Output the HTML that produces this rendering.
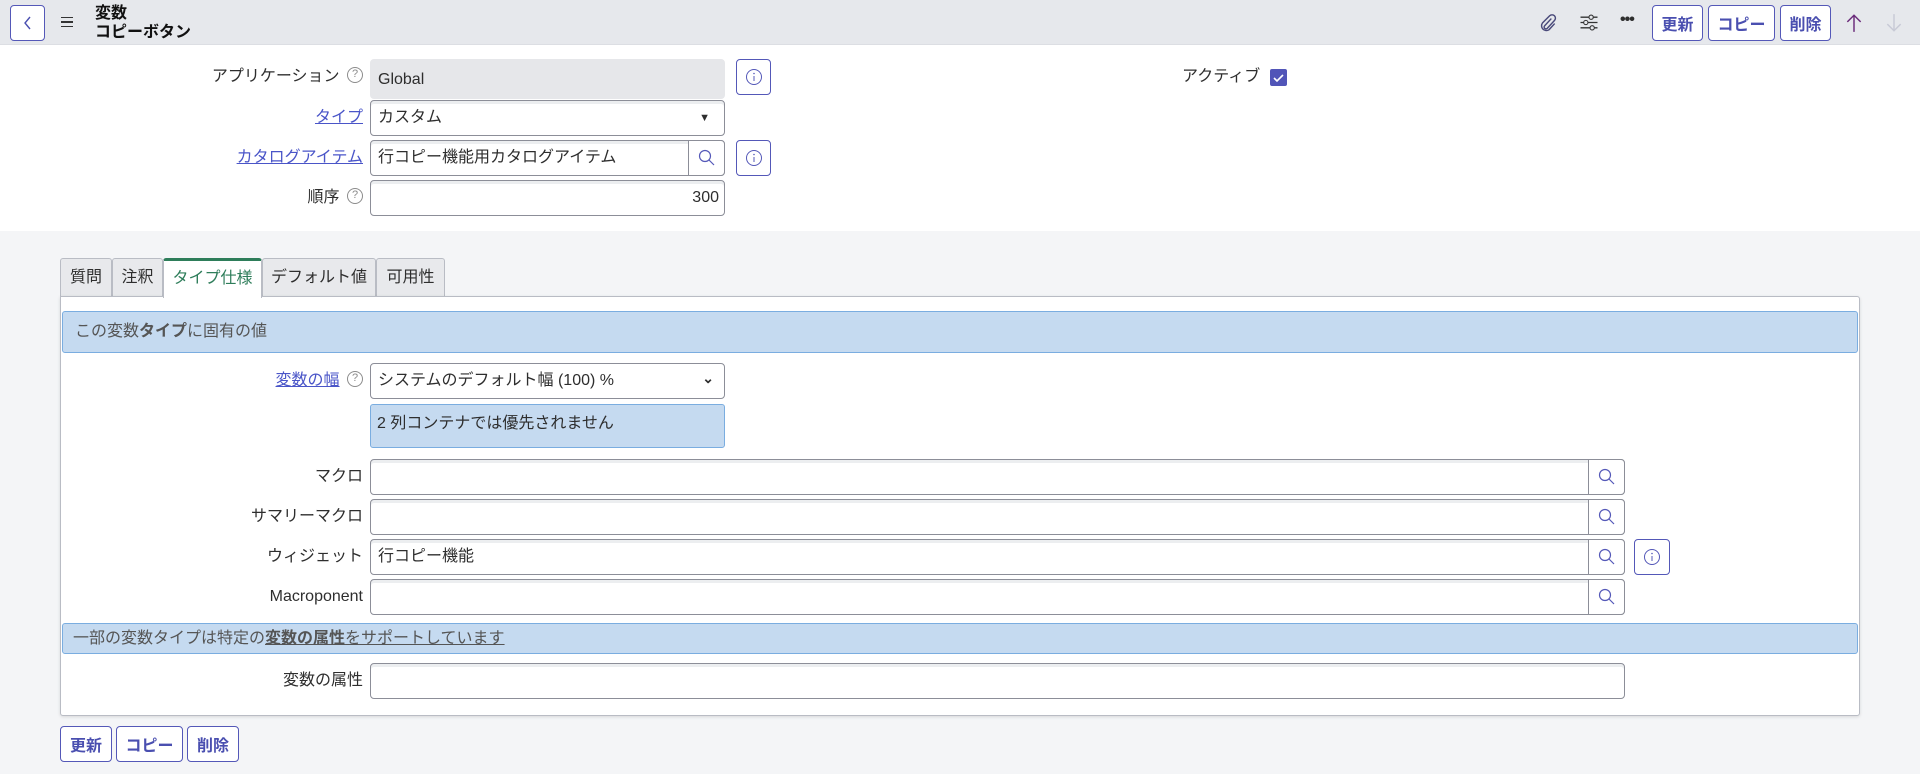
<!DOCTYPE html>
<html><head><meta charset="utf-8"><style>
*{box-sizing:border-box;margin:0;padding:0}
body{width:1920px;height:774px;background:#f4f5f7;font-family:"Liberation Sans","Noto Sans CJK JP",sans-serif;font-size:16px;color:#2e2e2e;position:relative;overflow:hidden}
.a{position:absolute}
.hdr{left:0;top:0;width:1920px;height:45px;background:#e6e8ec;border-bottom:1px solid #dcdee3}
.top{left:0;top:45px;width:1920px;height:186px;background:#fff}
.btn{position:absolute;border:1px solid #5458b8;border-radius:4px;background:#fff;color:#4a4fb0;font-weight:bold;font-size:16px;display:flex;align-items:center;justify-content:center;white-space:nowrap}
.lbl{position:absolute;right:1557px;text-align:right;white-space:nowrap;height:36px;line-height:36px}
.lnk{color:#4a55c8;text-decoration:underline}
.fld{position:absolute;border:1px solid #8c8e98;border-radius:4px;background:#fff;height:36px;line-height:34px;padding-left:7px;white-space:nowrap;box-shadow:inset 0 3px 0 #eceef0}
.srch{position:absolute;top:-1px;right:-1px;width:37px;height:36px;border:1px solid #8c8e98;border-radius:0 4px 4px 0;display:flex;align-items:center;justify-content:center;background:#fff}
.q{display:inline-block;width:16px;height:16px;border:1.3px solid #8c8c8c;border-radius:50%;vertical-align:middle;margin-left:3px;font-size:11px;line-height:13px;text-align:center;color:#8c8c8c;position:relative;top:-2px}
.tab{position:absolute;top:258px;height:39px;border:1px solid #b9bcc4;border-bottom:none;background:#e8e9ec;line-height:37px;text-align:center;border-radius:3px 3px 0 0;white-space:nowrap}
.bar{position:absolute;left:62px;width:1796px;background:#c5daf0;border:1px solid #7aade0;border-radius:3px;color:#555;padding-left:12px;white-space:nowrap}
</style></head><body>
<div class="a hdr"></div>
<div class="btn" style="left:10px;top:5px;width:35px;height:36px"><svg width="10" height="14" viewBox="0 0 10 14"><path d="M7 1L2 7l5 6" stroke="#4a4fb0" stroke-width="1.4" fill="none"/></svg></div>
<div class="a" style="left:61px;top:17px;width:12px"><div style="height:1.4px;background:#333;margin-bottom:3px"></div><div style="height:1.4px;background:#333;margin-bottom:3px"></div><div style="height:1.4px;background:#333"></div></div>
<div class="a" style="left:95px;top:4px;font-weight:bold;font-size:16px;line-height:19px;color:#111">変数<br>コピーボタン</div>
<svg class="a" style="left:1538px;top:13px" width="20" height="20" viewBox="0 0 18 18"><path d="M12 5l-6 6.5a1.6 1.6 0 0 0 2.3 2.3l6.5-7a3 3 0 0 0-4.3-4.3L4 9a4.3 4.3 0 0 0 6 6l5-5.5" stroke="#4a4a7a" stroke-width="1.3" fill="none"/></svg>
<svg class="a" style="left:1579px;top:14px" width="20" height="17" viewBox="0 0 18 16"><path d="M1 3h16M1 8h16M1 13h16" stroke="#333" stroke-width="1.2"/><circle cx="11" cy="3" r="2" fill="#e6e8ec" stroke="#333"/><circle cx="6" cy="8" r="2" fill="#e6e8ec" stroke="#333"/><circle cx="12" cy="13" r="2" fill="#e6e8ec" stroke="#333"/></svg>
<div class="a" style="left:1620px;top:11px;font-weight:bold;font-size:16px;letter-spacing:-1px">•••</div>
<div class="btn" style="left:1652px;top:5px;width:51px;height:36px">更新</div>
<div class="btn" style="left:1708px;top:5px;width:67px;height:36px">コピー</div>
<div class="btn" style="left:1780px;top:5px;width:51px;height:36px">削除</div>
<svg class="a" style="left:1845px;top:13px" width="18" height="20" viewBox="0 0 16 18"><path d="M8 17V2M2 8l6-6 6 6" stroke="#6a2a7a" stroke-width="1.3" fill="none"/></svg>
<svg class="a" style="left:1885px;top:13px" width="18" height="20" viewBox="0 0 16 18"><path d="M8 1v15M2 10l6 6 6-6" stroke="#c8cad6" stroke-width="1.3" fill="none"/></svg>

<div class="a top"></div>
<div class="lbl" style="top:59px">アプリケーション <span class="q">?</span></div>
<div class="fld" style="left:370px;top:59px;width:355px;height:40px;line-height:40px;background:#e6e7ea;border-color:#e6e7ea;box-shadow:none">Global</div>
<div class="btn" style="left:736px;top:59px;width:35px;height:36px"><svg width="18" height="18"><circle cx="9" cy="9" r="7.5" stroke="#5458b8" fill="none"/><path d="M9 8v5" stroke="#5458b8"/><circle cx="9" cy="5.5" r=".8" fill="#5458b8"/></svg></div>
<div class="lbl" style="top:100px"><span class="lnk">タイプ</span></div>
<div class="fld" style="left:370px;top:100px;width:355px">カスタム<span style="position:absolute;right:14px;font-size:11px">▼</span></div>
<div class="lbl" style="top:140px"><span class="lnk">カタログアイテム</span></div>
<div class="fld" style="left:370px;top:140px;width:355px">行コピー機能用カタログアイテム<div class="srch"><svg width="18" height="18"><circle cx="7" cy="7" r="5.5" stroke="#5458b8" fill="none" stroke-width="1.2"/><path d="M11 11l5 5" stroke="#5458b8" stroke-width="1.2"/></svg></div></div>
<div class="btn" style="left:736px;top:140px;width:35px;height:36px"><svg width="18" height="18"><circle cx="9" cy="9" r="7.5" stroke="#5458b8" fill="none"/><path d="M9 8v5" stroke="#5458b8"/><circle cx="9" cy="5.5" r=".8" fill="#5458b8"/></svg></div>
<div class="lbl" style="top:180px">順序 <span class="q">?</span></div>
<div class="fld" style="left:370px;top:180px;width:355px;text-align:right;padding-right:5px">300</div>
<div class="lbl" style="left:1182px;right:auto;top:59px">アクティブ</div>
<div class="a" style="left:1270px;top:69px;width:17px;height:17px;background:#5155b8;border-radius:2px"><svg width="17" height="17"><path d="M4 9l3 3 6-6" stroke="#fff" stroke-width="1.6" fill="none"/></svg></div>

<div class="tab" style="left:60px;width:52px">質問</div>
<div class="tab" style="left:112px;width:51px">注釈</div>
<div class="tab" style="left:163px;width:99px;background:#fff;color:#2e7d5a;border-top:3px solid #2e7d5a;line-height:35px;z-index:2;height:40px">タイプ仕様</div>
<div class="tab" style="left:262px;width:114px">デフォルト値</div>
<div class="tab" style="left:376px;width:69px">可用性</div>
<div class="a" style="left:60px;top:296px;width:1800px;height:420px;background:#fff;border:1px solid #b9bcc4;border-radius:0 3px 3px 3px;box-shadow:0 1px 3px rgba(0,0,0,.12)"></div>
<div class="bar" style="top:311px;height:42px;line-height:40px">この変数<b>タイプ</b>に固有の値</div>
<div class="lbl" style="top:363px"><span class="lnk">変数の幅</span> <span class="q">?</span></div>
<div class="fld" style="left:370px;top:363px;width:355px;box-shadow:none">システムのデフォルト幅 (100) %<span style="position:absolute;right:10px;top:-3px;font-size:14px;font-weight:bold">⌄</span></div>
<div class="a" style="left:370px;top:404px;width:355px;height:44px;background:#c5daf0;border:1px solid #7aade0;border-radius:3px;padding:4px 6px">2 列コンテナでは優先されません</div>
<div class="lbl" style="top:459px">マクロ</div>
<div class="fld" style="left:370px;top:459px;width:1255px"><div class="srch"><svg width="18" height="18"><circle cx="7" cy="7" r="5.5" stroke="#5458b8" fill="none" stroke-width="1.2"/><path d="M11 11l5 5" stroke="#5458b8" stroke-width="1.2"/></svg></div></div>
<div class="lbl" style="top:499px">サマリーマクロ</div>
<div class="fld" style="left:370px;top:499px;width:1255px"><div class="srch"><svg width="18" height="18"><circle cx="7" cy="7" r="5.5" stroke="#5458b8" fill="none" stroke-width="1.2"/><path d="M11 11l5 5" stroke="#5458b8" stroke-width="1.2"/></svg></div></div>
<div class="lbl" style="top:539px">ウィジェット</div>
<div class="fld" style="left:370px;top:539px;width:1255px">行コピー機能<div class="srch"><svg width="18" height="18"><circle cx="7" cy="7" r="5.5" stroke="#5458b8" fill="none" stroke-width="1.2"/><path d="M11 11l5 5" stroke="#5458b8" stroke-width="1.2"/></svg></div></div>
<div class="btn" style="left:1634px;top:539px;width:36px;height:36px"><svg width="18" height="18"><circle cx="9" cy="9" r="7.5" stroke="#5458b8" fill="none"/><path d="M9 8v5" stroke="#5458b8"/><circle cx="9" cy="5.5" r=".8" fill="#5458b8"/></svg></div>
<div class="lbl" style="top:579px">Macroponent</div>
<div class="fld" style="left:370px;top:579px;width:1255px"><div class="srch"><svg width="18" height="18"><circle cx="7" cy="7" r="5.5" stroke="#5458b8" fill="none" stroke-width="1.2"/><path d="M11 11l5 5" stroke="#5458b8" stroke-width="1.2"/></svg></div></div>
<div class="bar" style="top:623px;height:31px;line-height:29px;padding-left:10px">一部の変数タイプは特定の<span style="text-decoration:underline"><b>変数の属性</b>をサポートしています</span></div>
<div class="lbl" style="top:663px">変数の属性</div>
<div class="fld" style="left:370px;top:663px;width:1255px"></div>
<div class="btn" style="left:60px;top:726px;width:52px;height:36px">更新</div>
<div class="btn" style="left:116px;top:726px;width:67px;height:36px">コピー</div>
<div class="btn" style="left:187px;top:726px;width:52px;height:36px">削除</div>
</body></html>
